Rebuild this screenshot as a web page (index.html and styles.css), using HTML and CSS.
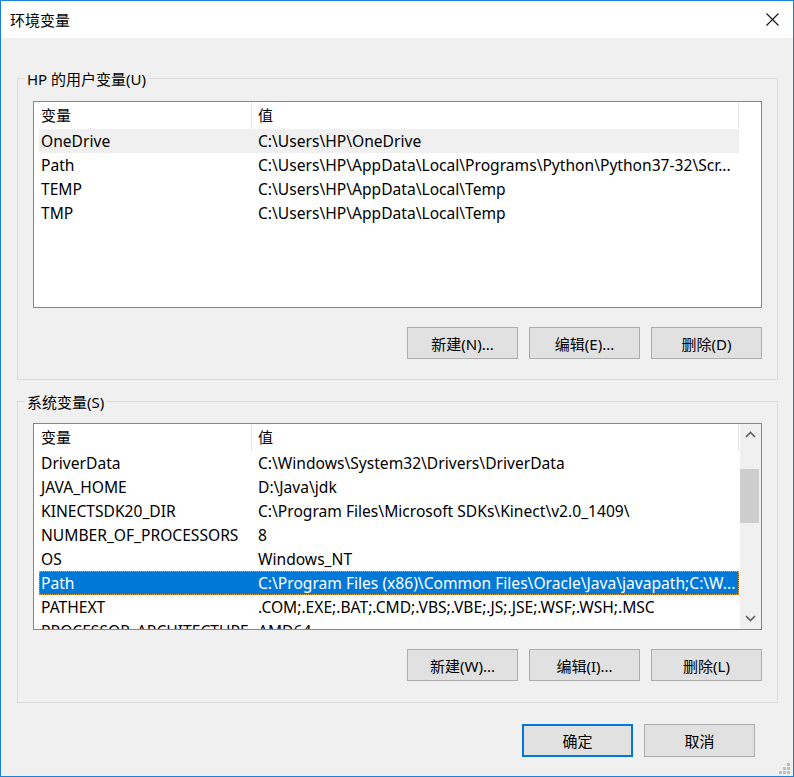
FILE: index.html
```html
<!DOCTYPE html>
<html lang="zh-CN">
<head>
<meta charset="utf-8">
<title>环境变量</title>
<link rel="stylesheet" href="styles.css">
</head>
<body>
<div class="window">
  <div class="titlebar">
    <span class="title">环境变量</span>
    <svg class="close" width="13" height="13" viewBox="0 0 13 13"><path d="M0.5 0.5 L12.5 12.5 M12.5 0.5 L0.5 12.5" stroke="#111" stroke-width="1.1" fill="none"/></svg>
  </div>
  <div class="content">
    <div class="group">
      <div class="group-title">HP 的用户变量(U)</div>
      <div class="listbox">
        <div class="listview">
          <div class="header"><div class="hcell hc1">变量</div><div class="hcell hc2">值</div></div>
          <div class="row hover"><div class="cell c1">OneDrive</div><div class="cell c2">C:\Users\HP\OneDrive</div></div>
          <div class="row"><div class="cell c1">Path</div><div class="cell c2">C:\Users\HP\AppData\Local\Programs\Python\Python37-32\Scr...</div></div>
          <div class="row"><div class="cell c1">TEMP</div><div class="cell c2">C:\Users\HP\AppData\Local\Temp</div></div>
          <div class="row"><div class="cell c1">TMP</div><div class="cell c2">C:\Users\HP\AppData\Local\Temp</div></div>
        </div>
      </div>
      <div class="buttons">
        <button class="btn">新建(N)...</button>
        <button class="btn">编辑(E)...</button>
        <button class="btn">删除(D)</button>
      </div>
    </div>

    <div class="group group2">
      <div class="group-title">系统变量(S)</div>
      <div class="listbox list2">
        <div class="listview">
          <div class="header"><div class="hcell hc1">变量</div><div class="hcell hc2">值</div></div>
          <div class="row"><div class="cell c1">DriverData</div><div class="cell c2">C:\Windows\System32\Drivers\DriverData</div></div>
          <div class="row"><div class="cell c1">JAVA_HOME</div><div class="cell c2">D:\Java\jdk</div></div>
          <div class="row"><div class="cell c1">KINECTSDK20_DIR</div><div class="cell c2">C:\Program Files\Microsoft SDKs\Kinect\v2.0_1409\</div></div>
          <div class="row"><div class="cell c1">NUMBER_OF_PROCESSORS</div><div class="cell c2">8</div></div>
          <div class="row"><div class="cell c1">OS</div><div class="cell c2">Windows_NT</div></div>
          <div class="row selected"><div class="cell c1">Path</div><div class="cell c2">C:\Program Files (x86)\Common Files\Oracle\Java\javapath;C:\W...</div></div>
          <div class="row"><div class="cell c1">PATHEXT</div><div class="cell c2">.COM;.EXE;.BAT;.CMD;.VBS;.VBE;.JS;.JSE;.WSF;.WSH;.MSC</div></div>
          <div class="row"><div class="cell c1">PROCESSOR_ARCHITECTURE</div><div class="cell c2">AMD64</div></div>
        </div>
        <div class="scrollbar">
          <div class="sb-btn"><svg width="11" height="7" viewBox="0 0 11 7"><path d="M1 6 L5.5 1.5 L10 6" stroke="#606060" stroke-width="1.6" fill="none"/></svg></div>
          <div class="sb-track"><div class="sb-thumb"></div></div>
          <div class="sb-btn"><svg width="11" height="7" viewBox="0 0 11 7"><path d="M1 1 L5.5 5.5 L10 1" stroke="#606060" stroke-width="1.6" fill="none"/></svg></div>
        </div>
      </div>
      <div class="buttons">
        <button class="btn">新建(W)...</button>
        <button class="btn">编辑(I)...</button>
        <button class="btn">删除(L)</button>
      </div>
    </div>

    <div class="dialog-buttons">
      <button class="btn default">确定</button>
      <button class="btn">取消</button>
    </div>
  </div>
  <svg class="grip" width="11" height="11" viewBox="0 0 11 11">
    <rect x="8" y="0" width="3" height="3" fill="#bfbfbf"/>
    <rect x="4" y="4" width="3" height="3" fill="#bfbfbf"/>
    <rect x="8" y="4" width="3" height="3" fill="#bfbfbf"/>
    <rect x="0" y="8" width="3" height="3" fill="#bfbfbf"/>
    <rect x="4" y="8" width="3" height="3" fill="#bfbfbf"/>
    <rect x="8" y="8" width="3" height="3" fill="#bfbfbf"/>
  </svg>
</div>
</body>
</html>
```

FILE: styles.css
```css
* { box-sizing: border-box; }
html, body { margin: 0; padding: 0; }
body {
  width: 794px;
  height: 777px;
  font-family: "Noto Sans", "Noto Sans CJK SC", sans-serif;
  font-size: 15px;
  color: #000;
  background: #f0f0f0;
  overflow: hidden;
}
.window {
  position: relative;
  width: 794px;
  height: 777px;
  border: 1px solid #1a82d8;
  background: #f0f0f0;
  display: flex;
  flex-direction: column;
}
.titlebar {
  height: 37px;
  background: #fff;
  display: flex;
  align-items: center;
  justify-content: space-between;
  padding: 0 14px 0 9px;
  flex: none;
}
.title {
  font-family: "Noto Sans CJK SC", sans-serif;
  font-size: 15px;
  line-height: 20px;
}
.close { display: block; }
.content {
  padding: 40px 15px 0 16px;
  display: flex;
  flex-direction: column;
}
.group {
  height: 302px;
  border: 1px solid #dcdcdc;
  display: flex;
  flex-direction: column;
}
.group2 { margin-top: 21px; }
.group-title {
  align-self: flex-start;
  margin: -10px 0 0 7px;
  padding: 0 2px;
  line-height: 20px;
  height: 20px;
  background: #f0f0f0;
  white-space: nowrap;
}
.listbox {
  margin: 12px 15px 0 15px;
  height: 207px;
  border: 1px solid #828790;
  background: #fff;
  display: flex;
  overflow: hidden;
}
.list2 { margin-top: 11px; }
.listview {
  flex: 1;
  overflow: hidden;
}
.header {
  display: flex;
  height: 27px;
}
.hcell {
  line-height: 27px;
  border-right: 1px solid #e5e5e5;
  white-space: nowrap;
}
.hc1 { width: 218px; padding-left: 7px; }
.hc2 { width: 487px; padding-left: 6px; }
.row {
  display: flex;
  width: 700px;
  height: 24px;
  margin-left: 5px;
  line-height: 24px;
  font-size: 15.6px;
  white-space: nowrap;
}
.cell { overflow: hidden; white-space: nowrap; }
.c1 { width: 212px; padding-left: 2px; flex: none; }
.c2 { flex: 1; padding-left: 7px; }
.row.hover { background: #f0f0f0; }
.row.selected {
  background: #0078d7;
  color: #fff;
  outline: 1px dotted #f0a040;
  outline-offset: -1px;
}
.scrollbar {
  width: 21px;
  flex: none;
  background: #f0f0f0;
  display: flex;
  flex-direction: column;
}
.sb-btn {
  height: 21px;
  display: flex;
  align-items: center;
  justify-content: center;
  flex: none;
}
.sb-btn svg { display: block; }
.sb-track { flex: 1; padding-top: 24px; }
.sb-thumb {
  width: 19px;
  height: 54px;
  background: #cdcdcd;
}
.buttons {
  display: flex;
  justify-content: flex-end;
  gap: 11px;
  margin: 19px 15px 0 0;
}
.btn {
  width: 111px;
  height: 32px;
  background: #e1e1e1;
  border: 1px solid #adadad;
  font-family: "Noto Sans", "Noto Sans CJK SC", sans-serif;
  font-size: 15px;
  color: #000;
  padding: 0;
  margin: 0;
}
.dialog-buttons {
  display: flex;
  justify-content: flex-end;
  gap: 11px;
  margin: 21px 23px 0 0;
}
.dialog-buttons .btn { height: 33px; }
.btn.default { border: 2px solid #0078d7; }
.grip {
  position: absolute;
  right: 3px;
  bottom: 2px;
}
```
